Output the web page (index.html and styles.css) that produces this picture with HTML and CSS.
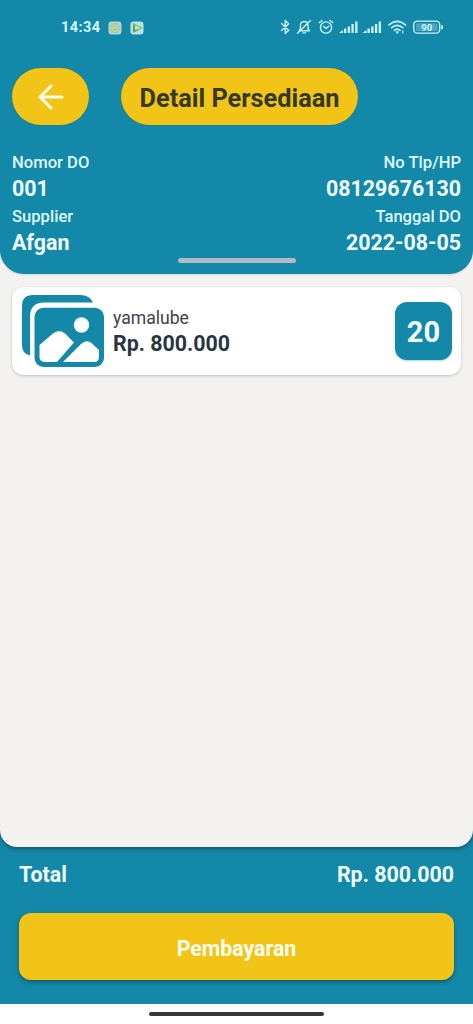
FILE: index.html
```html
<!DOCTYPE html>
<html lang="id">
<head>
<meta charset="utf-8">
<title>Detail Persediaan</title>
<link rel="stylesheet" href="styles.css">
</head>
<body>
<div class="screen">
  <div class="content">
    <header class="header">
      <div class="status">
        <div class="status-left">
          <span class="clock">14:34</span>
          <svg class="app-icon" width="14" height="14" viewBox="0 0 14 14"><rect x=".5" y=".5" width="13" height="13" rx="3" fill="#a9d8cf"/><circle cx="7" cy="7" r="4.400" fill="#bfd79b" stroke="#9cc4a4"/><path d="M4.800 5.700h1.400M7.800 5.700h1.400M5 8q2 2 4 0" fill="none" stroke="#8fb592" stroke-width=".8"/></svg>
          <svg class="app-icon" width="14" height="14" viewBox="0 0 14 14"><rect x=".5" y=".5" width="13" height="13" rx="3" fill="#b5e3e4"/><path d="M3.500 2.800v8.400L11.500 7z" fill="#4aa77c" stroke="#4aa77c" stroke-linejoin="round"/><path d="M3.500 2.800 11.500 7 8 8.800z" fill="#c9d34c"/><path d="M5.200 5v4L8.800 7z" fill="#d8f1cf"/></svg>
        </div>
        <svg class="status-right" width="164" height="18" viewBox="0 0 164 18" fill="none" stroke="#c9f3fa" stroke-width="1.400" stroke-linecap="round" stroke-linejoin="round">
          <path d="M1.500 5.500 8.700 12.200 5.200 15.600V2.400L8.700 5.800 1.500 12.500"/>
          <path d="M19 12.800h10.500L28 10.600V7.500c0-2.500-1.400-4-3.700-4S20.400 5 20.400 7.500v3.200zM23 14.900h2.500M17.500 15.200 30.500 2.500"/>
          <circle cx="46" cy="9.500" r="5.600"/><path d="M43.700 8.500 46 10.500 48.800 8.200M39.200 4.600 42 2.500M50 2.500 52.800 4.600"/>
          <g stroke="none" fill="#c9f3fa">
            <path d="M59 15 63 12v3zM64 10.500h2.300V15H64zM67.700 8.500H70V15h-2.300zM71.400 6h2.300v9h-2.300zM75.200 3.500h2.300V15h-2.300z"/>
            <path d="M82.500 15 86.500 12v3zM87.500 10.500h2.300V15h-2.300zM91.200 8.500h2.300V15h-2.300zM94.900 6h2.300v9h-2.300zM98.700 3.500h2.300V15h-2.300z"/>
          </g>
          <path d="M109 6.900Q117.200-.3 125.400 6.900M111.700 9.700Q117.200 5 122.700 9.700M114.400 12.300Q117.200 9.800 120 12.300" stroke-width="1.700"/>
          <circle cx="117.200" cy="14.300" r="1.200" fill="#c9f3fa" stroke="none"/><path d="M122.800 12.500v2.500" stroke-width="1"/>
          <rect x="133.700" y="3.100" width="26" height="12" rx="3.500"/><rect x="136" y="5.200" width="21.500" height="7.800" rx="1.500" fill="#4aa5bc" stroke="none"/>
          <path d="M162 8v2.400" stroke-width="1.800"/>
          <text class="battery" x="146.800" y="12.700" text-anchor="middle">90</text>
        </svg>
      </div>
      <div class="nav">
        <button class="pill back" aria-label="Kembali"><svg width="28" height="28" viewBox="0 0 28 28" fill="none" stroke="#fffdf0" stroke-width="3" stroke-linecap="round" stroke-linejoin="round"><path d="M25 14H3M14 3 3 14 14 25"/></svg></button>
        <h1 class="pill title">Detail Persediaan</h1>
      </div>
      <div class="info">
        <div class="col"><span class="label">Nomor DO</span><span class="value">001</span><span class="label">Supplier</span><span class="value">Afgan</span></div>
        <div class="col right"><span class="label">No Tlp/HP</span><span class="value">08129676130</span><span class="label">Tanggal DO</span><span class="value">2022-08-05</span></div>
      </div>
      <div class="handle"></div>
    </header>
    <article class="card">
      <svg class="thumb" width="82" height="73" viewBox="0 0 82 73">
        <path d="M11 0H58Q68 0 71 7.500H22Q8 7.500 8 22V60.500Q0 59 0 50V11Q0 0 11 0Z" fill="#1488a8"/>
        <rect x="12.500" y="12.800" width="69.500" height="59.200" rx="9" fill="#1488a8"/>
        <circle cx="59.500" cy="30" r="7.700" fill="#fff"/>
        <path d="M17.500 50 31 38.500Q37 33.500 43 38.500L52 47.500 35 67H22.500Q17.500 66.500 17.500 62Z" fill="#fff"/>
        <path d="M41 67 59 49Q64.500 44 70 48.500L77 55V62Q77 67 72 67Z" fill="#fff"/>
      </svg>
      <div class="item"><span class="name">yamalube</span><span class="price">Rp. 800.000</span></div>
      <div class="qty">20</div>
    </article>
  </div>
  <footer class="footer">
    <div class="total"><span>Total</span><span>Rp. 800.000</span></div>
    <button class="pay">Pembayaran</button>
  </footer>
  <div class="system"><div class="gesture"></div></div>
</div>
</body>
</html>
```
FILE: styles.css
```css
* { box-sizing: border-box; }
body { margin: 0; font-family: Roboto, "Liberation Sans", sans-serif; background: #fff; }
button { border: 0; font-family: inherit; }
.screen { width: 473px; height: 1024px; display: flex; flex-direction: column; background: #1488a8; }
.content { height: 847px; background: #f4f2f1; border-radius: 0 0 17px 17px; box-shadow: 0 2px 4px rgba(0, 0, 0, .35); }
.header { height: 274px; display: flex; flex-direction: column; background: #1488a8; border-radius: 0 0 24px 24px; box-shadow: 0 1px 2px rgba(0, 0, 0, .12); }
.status { height: 68px; padding: 18px 29px 0 61px; display: flex; justify-content: space-between; align-items: flex-start; }
.status-left { display: flex; align-items: center; height: 19px; }
.clock { color: #d5f8fd; font-size: 14.500px; font-weight: 700; letter-spacing: .4px; width: 47px; }
.app-icon { margin-right: 8px; }
.battery { font: 700 9.500px Roboto, sans-serif; fill: #d5f8fd; stroke: none; }
.nav { display: flex; gap: 32px; padding: 0 12px; }
.pill { margin: 0; height: 57px; border-radius: 29px; background: #f1c417; display: flex; align-items: center; justify-content: center; box-shadow: 0 0 1px rgba(50, 80, 30, .6); }
.back { width: 77px; padding: 0; }
.title { width: 237px; color: #343a2b; font-size: 25.300px; font-weight: 700; padding-top: 4px; white-space: nowrap; }
.info { display: flex; justify-content: space-between; padding: 24px 12px 0; }
.col { display: flex; flex-direction: column; color: #effdff; }
.right { text-align: right; }
.label { font-size: 16.600px; font-weight: 500; line-height: 26px; padding-top: 1px; height: 26px; color: #def9fd; }
.value { font-size: 21.400px; font-weight: 700; line-height: 28px; }
.handle { width: 118px; height: 5px; margin: 1px auto 0; border-radius: 3px; background: #b2bac5; }
.card { margin: 13px 12px 0; height: 88px; padding: 0 9px 0 10px; display: flex; align-items: center; border-radius: 12px; background: #fff; box-shadow: 0 1px 3px rgba(0, 0, 0, .22); }
.thumb { flex: none; }
.item { display: flex; flex-direction: column; margin-left: 9px; flex: 1; }
.name { font-size: 17.600px; line-height: 26px; color: #3b424b; }
.price { font-size: 21.400px; line-height: 26px; font-weight: 700; color: #2b3541; }
.qty { width: 57px; height: 58px; display: flex; align-items: center; justify-content: center; border-radius: 12px; background: #1488a8; color: #effdff; font-size: 29px; font-weight: 700; padding-top: 2px; box-shadow: 0 1px 2px rgba(20, 136, 168, .35); }
.footer { height: 157px; padding: 14px 19px 0; }
.total { display: flex; justify-content: space-between; color: #effdff; font-size: 21.400px; line-height: 28px; font-weight: 700; }
.pay { display: block; width: 100%; height: 67px; margin-top: 24px; border-radius: 12px; background: #f1c417; color: #fffdf0; font-size: 21.300px; font-weight: 700; padding: 3px 0 0; box-shadow: 0 2px 4px rgba(0, 0, 0, .35); }
.system { flex: 1; background: #fff; padding-top: 8px; }
.gesture { width: 175px; height: 4px; margin: 0 auto; border-radius: 2px; background: #343836; }
```
